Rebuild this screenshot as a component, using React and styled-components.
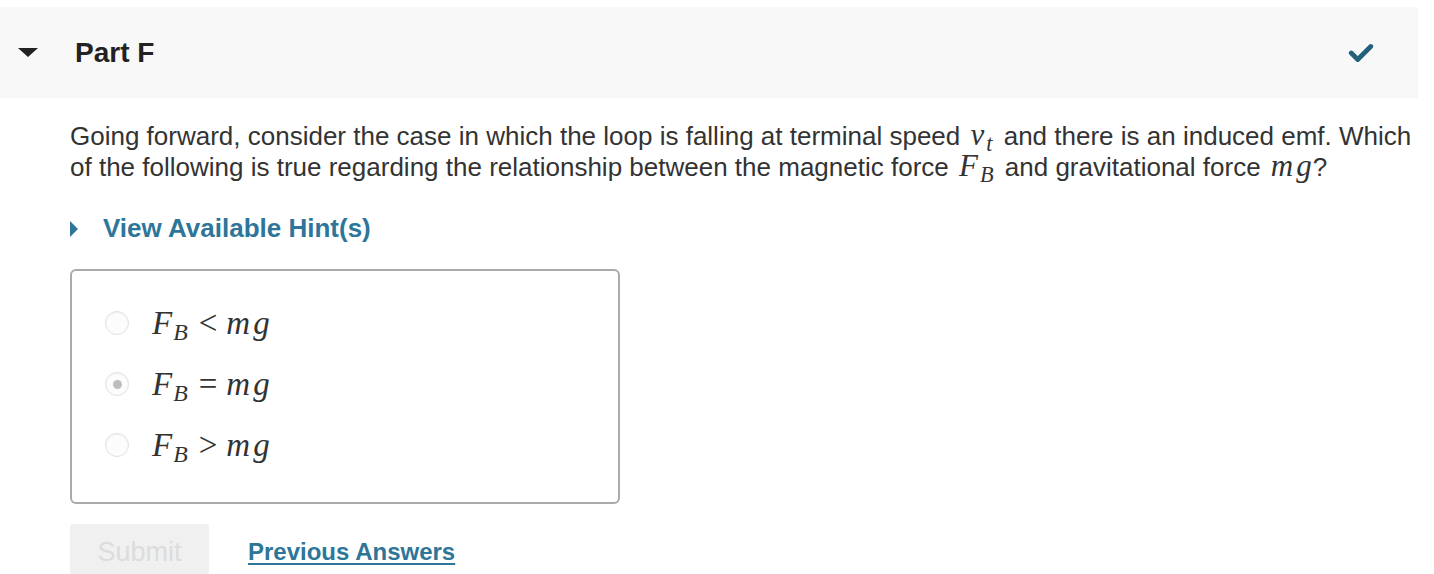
import React from "react";
import styled, { createGlobalStyle } from "styled-components";

const GlobalStyle = createGlobalStyle`
  body {
    margin: 0;
    background: #fff;
    font-family: "Liberation Sans", Arial, sans-serif;
    color: #333;
  }
`;

const options = [
  { id: "lt", op: "<", checked: false },
  { id: "eq", op: "=", checked: true },
  { id: "gt", op: ">", checked: false }
];

function App() {
  return (
    <Page>
      <GlobalStyle />
      <PartHeader>
        <Caret viewBox="0 0 20 10" aria-hidden="true">
          <path d="M0 0 L20 0 L10 9 Z" fill="#222" />
        </Caret>
        <PartTitle>Part F</PartTitle>
        <Check viewBox="0 0 24 18" aria-hidden="true">
          <path
            d="M3 9 L9 15 L21 3"
            fill="none"
            stroke="#245f7b"
            strokeWidth="4.4"
            strokeLinecap="round"
            strokeLinejoin="round"
          />
        </Check>
      </PartHeader>

      <Body>
        <Question>
          Going forward, consider the case in which the loop is falling at
          terminal speed{" "}
          <MathVar>
            v<Sub>t</Sub>
          </MathVar>{" "}
          and there is an induced emf. Which of the following is true
          regarding the relationship between the magnetic force{" "}
          <MathVar>
            F<Sub>B</Sub>
          </MathVar>{" "}
          and gravitational force <MathVar $wide>mg</MathVar>?
        </Question>

        <HintToggle>
          <HintArrow viewBox="0 0 8 16" aria-hidden="true">
            <path d="M0 0 L8 8 L0 16 Z" fill="#2e7699" />
          </HintArrow>
          View Available Hint(s)
        </HintToggle>

        <ChoiceBox>
          {options.map(({ id, op, checked }) => (
            <Choice key={id}>
              <Radio $checked={checked} />
              <MathExpr>
                <i>F</i>
                <Sub>B</Sub>
                <Op>{op}</Op>
                <Wide>mg</Wide>
              </MathExpr>
            </Choice>
          ))}
        </ChoiceBox>

        <Actions>
          <SubmitButton disabled>Submit</SubmitButton>
          <PrevLink href="#">Previous Answers</PrevLink>
        </Actions>
      </Body>
    </Page>
  );
}

export default App;

const Page = styled.div`
  padding-top: 7px;
  width: 1434px;
  height: 574px;
  overflow: hidden;
`;

const PartHeader = styled.div`
  display: flex;
  align-items: center;
  width: 1418px;
  height: 91px;
  background: #f8f8f8;
  box-sizing: border-box;
  padding-left: 18px;
  padding-right: 44px;
`;

const Caret = styled.svg`
  width: 20px;
  height: 10px;
  margin-right: 37px;
`;

const PartTitle = styled.h2`
  flex: 1;
  margin: 0;
  font-size: 28px;
  font-weight: 700;
  color: #222;
`;

const Check = styled.svg`
  width: 26px;
  height: 20px;
`;

const Body = styled.div`
  padding-left: 70px;
  padding-top: 23px;
`;

const Question = styled.p`
  margin: 0;
  font-size: 26px;
  line-height: 31px;
  color: #333;
  width: 1352px;
`;

const MathVar = styled.span`
  font-family: "Liberation Serif", "Times New Roman", serif;
  font-style: italic;
  font-size: 31px;
  line-height: 16px;
  letter-spacing: ${(p) => (p.$wide ? "3px" : "1px")};
  margin: ${(p) => (p.$wide ? "0 -2px 0 3px" : "0 3px")};
  color: #333;
`;

const Sub = styled.sub`
  font-size: 0.72em;
  vertical-align: -0.28em;
  line-height: 0;
  font-style: italic;
  margin-left: 1px;
`;

const HintToggle = styled.div`
  display: flex;
  align-items: center;
  margin-top: 30px;
  font-size: 26px;
  font-weight: 700;
  color: #2e7699;
`;

const HintArrow = styled.svg`
  width: 8px;
  height: 16px;
  margin-right: 25px;
`;

const ChoiceBox = styled.div`
  margin-top: 25px;
  width: 550px;
  height: 235px;
  box-sizing: border-box;
  border: 2px solid #aaa;
  border-radius: 6px;
  padding: 29px 0 0 33px;
  display: flex;
  flex-direction: column;
  gap: 15px;
`;

const Choice = styled.label`
  display: flex;
  align-items: center;
  height: 46px;
`;

const Radio = styled.span`
  width: 24px;
  height: 24px;
  box-sizing: border-box;
  border-radius: 50%;
  border: 1px solid #e0e0e0;
  background: #fcfcfc;
  box-shadow: inset 0 1px 2px rgba(0, 0, 0, 0.04);
  margin-right: 23px;
  display: flex;
  align-items: center;
  justify-content: center;

  &::after {
    content: "";
    display: ${(p) => (p.$checked ? "block" : "none")};
    width: 9px;
    height: 9px;
    border-radius: 50%;
    background: #bdbdbd;
  }
`;

const MathExpr = styled.span`
  font-family: "Liberation Serif", "Times New Roman", serif;
  font-size: 33px;
  font-style: italic;
  color: #333;
`;

const Op = styled.span`
  font-style: normal;
  margin: 0 9px 0 11px;
`;

const Wide = styled.i`
  letter-spacing: 3px;
`;

const Actions = styled.div`
  display: flex;
  align-items: center;
  margin-top: 20px;
  gap: 39px;
`;

const SubmitButton = styled.button`
  width: 139px;
  height: 56px;
  border: none;
  border-radius: 3px;
  background: #f0f0f0;
  color: #dcdcdc;
  font-family: "Liberation Sans", Arial, sans-serif;
  font-size: 27px;
  padding: 0;
`;

const PrevLink = styled.a`
  font-size: 24px;
  font-weight: 700;
  color: #2e7699;
  text-decoration: underline;
  text-underline-offset: 3px;
`;
